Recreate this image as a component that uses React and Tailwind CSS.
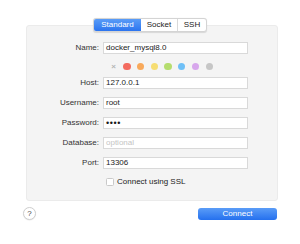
import React from "react";

const font = { fontFamily: '"Liberation Sans", Arial, sans-serif' };

function Row({ label, children }) {
  return (
    <div className="flex items-center h-[12px]">
      <div className="w-[76px] pr-[4px] text-right text-[8px] text-[#333] leading-none">{label}</div>
      {children}
    </div>
  );
}

function Field({ value, placeholder, password }) {
  return (
    <div className="w-[145px] h-[12px] bg-white border border-[#d9d9d9] flex items-center pl-[2px] text-[8px] leading-none text-[#1a1a1a]">
      {password ? (
        <span className="text-[9px] tracking-[0.6px] leading-none">{value}</span>
      ) : value ? (
        <span>{value}</span>
      ) : (
        <span className="text-[#c4c4c4]">{placeholder}</span>
      )}
    </div>
  );
}

const dots = ["#f36b5f", "#f8a95b", "#f6dd72", "#b5dd6e", "#6fc0f7", "#d7a7ec", "#c6c6c6"];

export default function App() {
  return (
    <div className="w-[300px] h-[244px] bg-white relative" style={font}>
      <div className="pt-[18px] flex flex-col items-center">
        <div className="relative z-10 flex h-[14px] rounded-[3px] border border-[#d4d4d4] bg-white text-[8px] leading-none shadow-[0_0.5px_1px_rgba(0,0,0,0.12)] overflow-hidden">
          <div className="w-[47px] flex items-center justify-center text-white bg-gradient-to-b from-[#5a9cf7] to-[#2b74ef]">Standard</div>
          <div className="w-[37px] flex items-center justify-center text-[#222] border-r border-[#d9d9d9]">Socket</div>
          <div className="w-[28px] flex items-center justify-center text-[#222]">SSH</div>
        </div>
      </div>
      <div className="ml-[26px] -mt-[7px] w-[252px] h-[176px] bg-[#f4f4f4] border border-[#ebebeb] rounded-[3px] pt-[16px]">
        <Row label="Name:">
          <Field value="docker_mysql8.0" />
        </Row>
        <div className="flex items-center h-[7px] mt-[9px] mb-[7px] pl-[83px] gap-[6.4px]">
          <span className="w-[7px] text-[8px] leading-none text-[#b5b5b5] font-bold flex justify-center">×</span>
          {dots.map((c) => (
            <span key={c} className="w-[7.3px] h-[7.3px] rounded-full" style={{ backgroundColor: c }} />
          ))}
        </div>
        <div className="flex flex-col gap-[8px]">
          <Row label="Host:">
            <Field value="127.0.0.1" />
          </Row>
          <Row label="Username:">
            <Field value="root" />
          </Row>
          <Row label="Password:">
            <Field value="••••" password />
          </Row>
          <Row label="Database:">
            <Field placeholder="optional" />
          </Row>
          <Row label="Port:">
            <Field value="13306" />
          </Row>
        </div>
        <div className="flex items-center mt-[9px] pl-[79px] h-[8px]">
          <span className="w-[8px] h-[8px] bg-white border border-[#c9c9c9] rounded-[1.5px]" />
          <span className="ml-[3px] text-[8px] leading-none text-[#222]">Connect using SSL</span>
        </div>
      </div>
      <div className="flex items-center justify-between mt-[6px] pl-[23px] pr-[23px]">
        <div className="w-[13px] h-[13px] rounded-full bg-white border border-[#cfcfcf] shadow-[0_0.5px_1px_rgba(0,0,0,0.1)] flex items-center justify-center text-[8px] leading-none text-[#444]">?</div>
        <div className="w-[79px] h-[12px] rounded-[3px] bg-gradient-to-b from-[#5a9cf7] to-[#2470ee] flex items-center justify-center text-white text-[8px] leading-none">Connect</div>
      </div>
    </div>
  );
}
